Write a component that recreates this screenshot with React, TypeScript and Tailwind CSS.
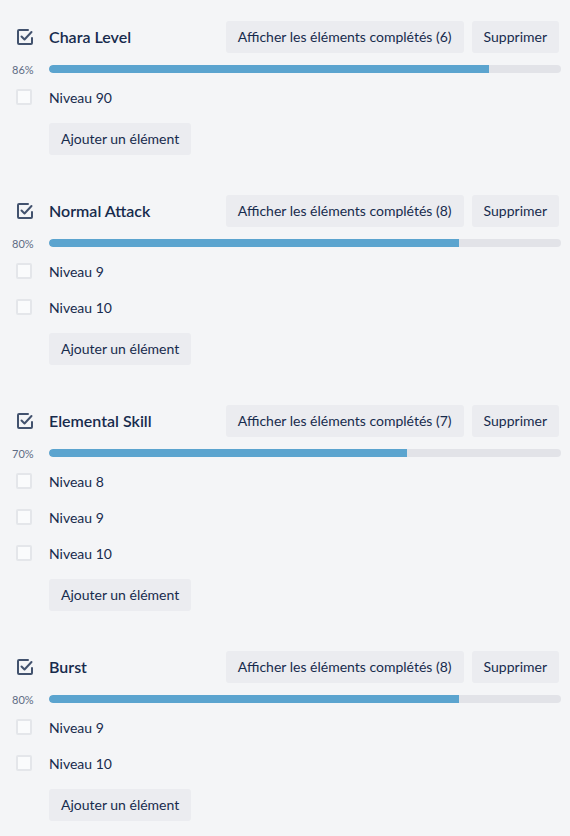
import React from 'react';

type Checklist = { title: string; pct: number; done: number; items: string[] };

const lists: Checklist[] = [
  { title: 'Chara Level', pct: 86, done: 6, items: ['Niveau 90'] },
  { title: 'Normal Attack', pct: 80, done: 8, items: ['Niveau 9', 'Niveau 10'] },
  { title: 'Elemental Skill', pct: 70, done: 7, items: ['Niveau 8', 'Niveau 9', 'Niveau 10'] },
  { title: 'Burst', pct: 80, done: 8, items: ['Niveau 9', 'Niveau 10'] },
];

function ChecklistIcon() {
  return (
    <svg width="18" height="18" viewBox="0 0 18 18" fill="none" stroke="#42526e" strokeWidth="2" strokeLinecap="round" strokeLinejoin="round">
      <path d="M16 10v5a1 1 0 0 1-1 1H3a1 1 0 0 1-1-1V3a1 1 0 0 1 1-1h9" />
      <path d="M5.5 8.5l3 3 7-7.5" />
    </svg>
  );
}

function Btn({ children }: { children: React.ReactNode }) {
  return (
    <button className="h-8 px-3 rounded-[3px] bg-[#ebecf0] text-[14px] text-[#172b4d] leading-5 whitespace-nowrap">
      {children}
    </button>
  );
}

function ChecklistBlock({ list }: { list: Checklist }) {
  return (
    <section className="mb-10">
      <div className="flex items-center h-8">
        <div className="w-[37px] pl-1 shrink-0 flex items-center"><ChecklistIcon /></div>
        <h3 className="flex-1 text-[16px] font-semibold text-[#172b4d]">{list.title}</h3>
        <div className="flex gap-2 mr-[2px]">
          <Btn>Afficher les éléments complétés ({list.done})</Btn>
          <Btn>Supprimer</Btn>
        </div>
      </div>
      <div className="flex items-center mt-3 h-2">
        <span className="w-[37px] shrink-0 text-[11px] text-[#5e6c84] leading-none">{list.pct}%</span>
        <div className="flex-1 h-2 rounded bg-[#e2e3e8] overflow-hidden">
          <div className="h-full bg-[#5ba4cf] rounded-l" style={{ width: `${list.pct}%` }} />
        </div>
      </div>
      <ul className="mt-1.5">
        {list.items.map((it) => (
          <li key={it} className="flex items-center h-9">
            <div className="w-[37px] pl-1 shrink-0">
              <span className="block w-[16px] h-[16px] rounded-[2px] border-2 border-[#e4e6ea] bg-[#fafbfc]" />
            </div>
            <span className="text-[14px] text-[#172b4d]">{it}</span>
          </li>
        ))}
      </ul>
      <div className="mt-2 pl-[37px]">
        <Btn>Ajouter un élément</Btn>
      </div>
    </section>
  );
}

export default function App() {
  return (
    <main className="min-h-[836px] bg-[#f4f5f7] pl-3 pr-[9px] pt-[21px] font-['Segoe_UI','Lato',sans-serif]">
      {lists.map((l) => <ChecklistBlock key={l.title} list={l} />)}
    </main>
  );
}
